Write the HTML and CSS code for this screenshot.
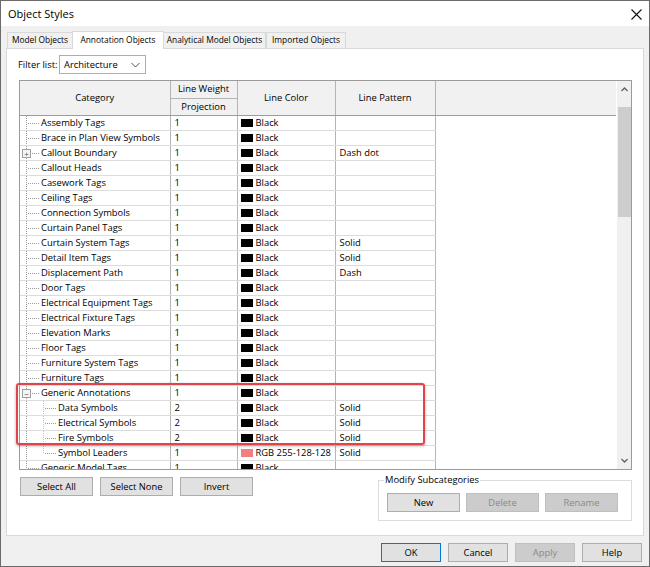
FILE: index.html
```html
<!DOCTYPE html>
<html>
<head>
<meta charset="utf-8">
<link rel="stylesheet" href="styles.css">
</head>
<body>
<div class="window">
  <div class="titlebar">
    <span class="title">Object Styles</span>
    <svg class="close" width="11" height="11" viewBox="0 0 11 11"><path d="M0.5 0.5 L10.5 10.5 M10.5 0.5 L0.5 10.5" stroke="#111" stroke-width="1.1" fill="none"/></svg>
  </div>
  <div class="tabs">
    <div class="tab">Model Objects</div>
    <div class="tab active">Annotation Objects</div>
    <div class="tab">Analytical Model Objects</div>
    <div class="tab">Imported Objects</div>
  </div>
  <div class="panel">
    <div class="filter">
      <span class="filter-label">Filter list:</span>
      <div class="select">
        <span>Architecture</span>
        <svg width="9" height="6" viewBox="0 0 9 6"><path d="M0.5 1 L4.5 5 L8.5 1" stroke="#555" stroke-width="1" fill="none"/></svg>
      </div>
    </div>
    <div class="grid-wrap">
      <div class="grid">
        <table class="styles">
          <colgroup>
            <col class="c-cat"><col class="c-lw"><col class="c-color"><col class="c-pat"><col class="c-fill">
          </colgroup>
          <thead>
            <tr class="h1">
              <th rowspan="2">Category</th>
              <th>Line Weight</th>
              <th rowspan="2">Line Color</th>
              <th rowspan="2">Line Pattern</th>
              <th rowspan="2" class="fill"></th>
            </tr>
            <tr class="h2">
              <th>Projection</th>
            </tr>
          </thead>
          <tbody>
            <tr><td class="cat"><span class="tree"></span>Assembly Tags</td><td>1</td><td><span class="sw"></span>Black</td><td></td><td class="fill"></td></tr>
            <tr><td class="cat"><span class="tree"></span>Brace in Plan View Symbols</td><td>1</td><td><span class="sw"></span>Black</td><td></td><td class="fill"></td></tr>
            <tr><td class="cat"><span class="tree"></span><span class="exp">+</span>Callout Boundary</td><td>1</td><td><span class="sw"></span>Black</td><td>Dash dot</td><td class="fill"></td></tr>
            <tr><td class="cat"><span class="tree"></span>Callout Heads</td><td>1</td><td><span class="sw"></span>Black</td><td></td><td class="fill"></td></tr>
            <tr><td class="cat"><span class="tree"></span>Casework Tags</td><td>1</td><td><span class="sw"></span>Black</td><td></td><td class="fill"></td></tr>
            <tr><td class="cat"><span class="tree"></span>Ceiling Tags</td><td>1</td><td><span class="sw"></span>Black</td><td></td><td class="fill"></td></tr>
            <tr><td class="cat"><span class="tree"></span>Connection Symbols</td><td>1</td><td><span class="sw"></span>Black</td><td></td><td class="fill"></td></tr>
            <tr><td class="cat"><span class="tree"></span>Curtain Panel Tags</td><td>1</td><td><span class="sw"></span>Black</td><td></td><td class="fill"></td></tr>
            <tr><td class="cat"><span class="tree"></span>Curtain System Tags</td><td>1</td><td><span class="sw"></span>Black</td><td>Solid</td><td class="fill"></td></tr>
            <tr><td class="cat"><span class="tree"></span>Detail Item Tags</td><td>1</td><td><span class="sw"></span>Black</td><td>Solid</td><td class="fill"></td></tr>
            <tr><td class="cat"><span class="tree"></span>Displacement Path</td><td>1</td><td><span class="sw"></span>Black</td><td>Dash</td><td class="fill"></td></tr>
            <tr><td class="cat"><span class="tree"></span>Door Tags</td><td>1</td><td><span class="sw"></span>Black</td><td></td><td class="fill"></td></tr>
            <tr><td class="cat"><span class="tree"></span>Electrical Equipment Tags</td><td>1</td><td><span class="sw"></span>Black</td><td></td><td class="fill"></td></tr>
            <tr><td class="cat"><span class="tree"></span>Electrical Fixture Tags</td><td>1</td><td><span class="sw"></span>Black</td><td></td><td class="fill"></td></tr>
            <tr><td class="cat"><span class="tree"></span>Elevation Marks</td><td>1</td><td><span class="sw"></span>Black</td><td></td><td class="fill"></td></tr>
            <tr><td class="cat"><span class="tree"></span>Floor Tags</td><td>1</td><td><span class="sw"></span>Black</td><td></td><td class="fill"></td></tr>
            <tr><td class="cat"><span class="tree"></span>Furniture System Tags</td><td>1</td><td><span class="sw"></span>Black</td><td></td><td class="fill"></td></tr>
            <tr><td class="cat"><span class="tree"></span>Furniture Tags</td><td>1</td><td><span class="sw"></span>Black</td><td></td><td class="fill"></td></tr>
            <tr><td class="cat"><span class="tree"></span><span class="exp">&minus;</span>Generic Annotations</td><td>1</td><td><span class="sw"></span>Black</td><td></td><td class="fill"></td></tr>
            <tr><td class="cat child"><span class="tree"></span><span class="tree2"></span>Data Symbols</td><td>2</td><td><span class="sw"></span>Black</td><td>Solid</td><td class="fill"></td></tr>
            <tr><td class="cat child"><span class="tree"></span><span class="tree2"></span>Electrical Symbols</td><td>2</td><td><span class="sw"></span>Black</td><td>Solid</td><td class="fill"></td></tr>
            <tr><td class="cat child"><span class="tree"></span><span class="tree2"></span>Fire Symbols</td><td>2</td><td><span class="sw"></span>Black</td><td>Solid</td><td class="fill"></td></tr>
            <tr><td class="cat child last"><span class="tree"></span><span class="tree2"></span>Symbol Leaders</td><td>1</td><td><span class="sw pink"></span>RGB 255-128-128</td><td>Solid</td><td class="fill"></td></tr>
            <tr><td class="cat"><span class="tree"></span>Generic Model Tags</td><td>1</td><td><span class="sw"></span>Black</td><td></td><td class="fill"></td></tr>
          </tbody>
        </table>
      </div>
      <div class="scrollbar">
        <svg class="sarrow" width="7" height="5" viewBox="0 0 7 5"><path d="M0.5 4 L3.5 1 L6.5 4" stroke="#606060" stroke-width="1.3" fill="none"/></svg>
        <div class="track"><div class="thumb"></div></div>
        <svg class="sarrow" width="7" height="5" viewBox="0 0 7 5"><path d="M0.5 1 L3.5 4 L6.5 1" stroke="#606060" stroke-width="1.3" fill="none"/></svg>
      </div>
      <div class="highlight"></div>
    </div>
    <div class="actions">
      <div class="btnrow">
        <button class="btn">Select All</button>
        <button class="btn">Select None</button>
        <button class="btn">Invert</button>
      </div>
      <fieldset class="group">
        <legend>Modify Subcategories</legend>
        <button class="btn">New</button>
        <button class="btn disabled">Delete</button>
        <button class="btn disabled">Rename</button>
      </fieldset>
    </div>
  </div>
  <div class="footer">
    <button class="btn fbtn default">OK</button>
    <button class="btn fbtn">Cancel</button>
    <button class="btn fbtn disabled">Apply</button>
    <button class="btn fbtn">Help</button>
  </div>
</div>
</body>
</html>
```

FILE: styles.css
```css
* { box-sizing: border-box; }
html, body { margin: 0; padding: 0; background: #ffffff; }
body {
  font-family: "Open Sans", "Noto Sans", sans-serif;
  font-size: 9.4px;
  color: #000;
}
.window {
  width: 650px;
  height: 567px;
  border: 1px solid #6b6b6b;
  background: #f0f0f0;
  display: flex;
  flex-direction: column;
}
.titlebar {
  height: 25px;
  background: #ffffff;
  display: flex;
  align-items: center;
  justify-content: space-between;
  padding: 0 7px 0 7px;
  flex: none;
}
.title { font-size: 11px; color: #000; }
.close { margin-top: 1px; }

.tabs {
  display: flex;
  align-items: flex-end;
  height: 22px;
  padding-left: 6px;
  flex: none;
  font-size: 8.4px;
}
.tab {
  height: 16px;
  line-height: 14px;
  padding: 0;
  border: 1px solid #d9d9d9;
  border-bottom: none;
  background: #f0f0f0;
  white-space: nowrap;
  color: #000;
  text-align: center;
}
.tab:nth-child(1) { width: 66px; }
.tab:nth-child(2) { width: 92px; }
.tab:nth-child(3) { width: 103px; }
.tab:nth-child(4) { width: 80px; }
.tab.active {
  height: 18px;
  background: #ffffff;
  position: relative;
  top: 1px;
  z-index: 2;
  margin: 0 -1px;
  line-height: 15px;
}
.panel {
  margin: 0 5px 0 5px;
  height: 488px;
  background: #ffffff;
  border: 1px solid #d9d9d9;
  padding: 6px 10px 0 12px;
  flex: none;
}
.filter {
  display: flex;
  align-items: center;
  height: 19px;
}
.filter-label { width: 41px; margin-left: -1px; }
.select {
  width: 87px;
  height: 19px;
  border: 1px solid #adadad;
  background: #fff;
  display: flex;
  align-items: center;
  justify-content: space-between;
  padding: 0 5px 0 4px;
}

.grid-wrap {
  position: relative;
  margin-top: 6px;
  width: 613px;
  height: 390px;
  border: 1px solid #9a9a9a;
  display: flex;
  background: #fff;
}
.grid {
  width: 597px;
  height: 100%;
  overflow: hidden;
}
table.styles {
  width: 597px;
  table-layout: fixed;
  border-collapse: collapse;
}
col.c-cat { width: 150px; }
col.c-lw { width: 67px; }
col.c-color { width: 98px; }
col.c-pat { width: 100px; }
col.c-fill { width: 182px; }

.styles tr.h1 { height: 17px; }
.styles tr.h2 { height: 17px; }
.styles th {
  background: #f1f1f1;
  font-weight: normal;
  text-align: center;
  border: 1px solid #b4b4b4;
  border-top: none;
  padding: 0;
  line-height: 14px;
}
.styles th:first-child { border-left: none; }
.styles th.fill { border-right: none; }
.styles thead tr.h2 th, .styles thead tr.h1 th[rowspan] { border-bottom: 1px solid #9c9c9c; }
.styles thead tr.h1 th:not([rowspan]) { border-bottom: 1px solid #b4b4b4; }

.styles tbody tr { height: 15px; }
.styles td {
  line-height: 13px;
  padding: 0 0 0 4px;
  border-right: 1px solid #b4b4b4;
  border-bottom: 1px solid #dcdcdc;
  white-space: nowrap;
  overflow: hidden;
  vertical-align: middle;
}
.styles td.fill { border: none; }
.styles td.cat {
  position: relative;
  padding-left: 21px;
}
.styles td.cat.child { padding-left: 38px; }

.tree {
  position: absolute;
  left: 0; top: 0; bottom: 0;
  width: 20px;
}
.tree::before {
  content: "";
  position: absolute;
  left: 6px; top: -1px; bottom: -1px;
  border-left: 1px dotted #9a9a9a;
}
.tree::after {
  content: "";
  position: absolute;
  left: 8px; width: 11px; top: 7px;
  border-top: 1px dotted #9a9a9a;
}
.child .tree::after { display: none; }
.tree2 {
  position: absolute;
  left: 0; top: 0; bottom: 0;
  width: 37px;
}
.tree2::before {
  content: "";
  position: absolute;
  left: 23px; top: -1px; bottom: -1px;
  border-left: 1px dotted #c2c2c2;
}
.last .tree2::before { bottom: 7px; }
.tree2::after {
  content: "";
  position: absolute;
  left: 25px; width: 11px; top: 7px;
  border-top: 1px dotted #9a9a9a;
}
.exp {
  position: absolute;
  left: 2px; top: 3px;
  width: 9px; height: 9px;
  border: 1px solid #a0a0a0;
  background: #f4f4f4;
  font-size: 8px;
  line-height: 7px;
  text-align: center;
  color: #555;
  z-index: 1;
}

.sw {
  display: inline-block;
  width: 12px;
  height: 8px;
  background: #000;
  margin-right: 3px;
  margin-left: -1px;
  vertical-align: -1px;
}
.sw.pink { background: #f08080; }

.scrollbar {
  width: 14px;
  height: 100%;
  background: #f0f0f0;
  display: flex;
  flex-direction: column;
  align-items: center;
  margin-left: 1px;
}
.sarrow { flex: none; margin: 6px 0; }
.track { flex: 1; width: 100%; padding-top: 9px; }
.thumb { width: 13px; margin: 0 auto; height: 110px; background: #cdcdcd; }

.highlight {
  position: absolute;
  left: -4px;
  top: 302px;
  width: 409px;
  height: 62px;
  border: 2px solid #e2424a;
  border-radius: 3px;
  box-shadow: 0 1px 3px rgba(0,0,0,0.35);
  pointer-events: none;
}

.actions {
  display: flex;
  justify-content: space-between;
  align-items: flex-start;
  width: 613px;
}
.btnrow {
  display: flex;
  gap: 7px;
  margin-top: 7px;
  margin-left: 1px;
}
.btn {
  font-family: "Open Sans", "Noto Sans", sans-serif;
  font-size: 9.4px;
  width: 73px;
  height: 19px;
  border: 1px solid #adadad;
  background: #e1e1e1;
  color: #000;
  padding: 0;
  line-height: 16px;
}
.btn.disabled {
  background: #cccccc;
  border-color: #bfbfbf;
  color: #8a8a8a;
}
.group {
  margin: 4px 0 0 0;
  width: 254px;
  height: 47px;
  border: 1px solid #dcdcdc;
  padding: 7px 0 0 8px;
  display: flex;
  gap: 6px;
  align-items: flex-start;
}
.group legend {
  padding: 0 1px;
  margin-left: -3px;
  line-height: 12px;
}
.footer {
  display: flex;
  justify-content: flex-end;
  gap: 7px;
  padding: 7px 7px 0 0;
}
.fbtn { width: 60px; height: 19px; }
.fbtn.default { border-color: #0078d7; }
```
